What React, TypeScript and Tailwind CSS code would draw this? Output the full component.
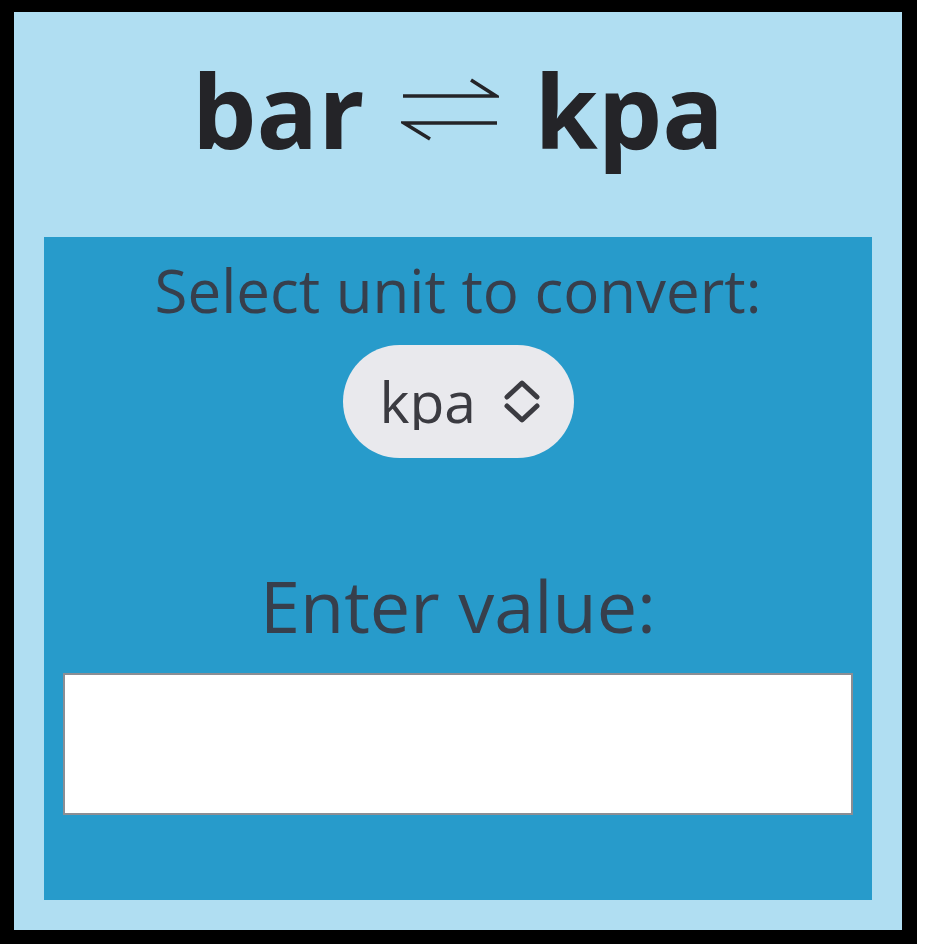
import { useState } from 'react';

const UNITS = ['kpa', 'bar'];

export default function App() {
  const [unit, setUnit] = useState('kpa');
  const [value, setValue] = useState('');

  return (
    <div className="w-[917px] h-[944px] bg-black pt-[12px] pl-[14px] pr-[15px] pb-[14px] font-['Open_Sans',sans-serif]">
      <div className="h-full bg-[#b0def2] px-[30px] pb-[30px] flex flex-col">
        <header className="h-[225px] shrink-0 pt-[47px] flex justify-center">
          <h1 className="flex items-start text-[102px] leading-none font-bold text-[#242428]">
            <span>bar</span>
            <SwapIcon />
            <span>kpa</span>
          </h1>
        </header>

        <main className="flex-1 bg-[#279bcb] flex flex-col items-center pt-[23px]">
          <label htmlFor="unit" className="text-[60px] leading-none text-[#373f4c]">
            Select unit to convert:
          </label>

          <div className="relative mt-[25px]">
            <select
              id="unit"
              value={unit}
              onChange={(e) => setUnit(e.target.value)}
              className="appearance-none h-[113px] w-[231px] rounded-full bg-[#e9e9ed] pl-[37px] text-[57px] leading-none text-[#3b3b41] outline-none"
            >
              {UNITS.map((u) => (
                <option key={u} value={u}>
                  {u}
                </option>
              ))}
            </select>
            <ChevronsIcon />
          </div>

          <label htmlFor="value" className="mt-[111px] text-[72px] leading-none text-[#373f4c]">
            Enter value:
          </label>

          <input
            id="value"
            type="number"
            value={value}
            onChange={(e) => setValue(e.target.value)}
            className="mt-[32px] h-[142px] w-[790px] bg-white border-2 border-[#8b8e94] px-4 text-[57px] text-[#242428] outline-none"
          />
        </main>
      </div>
    </div>
  );
}

// right harpoon over left harpoon
function SwapIcon() {
  return (
    <svg
      className="mx-[36px] mt-[18px]"
      width="98"
      height="64"
      viewBox="0 0 98 64"
      fill="none"
      stroke="#242428"
      strokeWidth="3.5"
      strokeLinecap="butt"
    >
      <path d="M2 19H95L70 3" />
      <path d="M96 46H3L29 62" />
    </svg>
  );
}

function ChevronsIcon() {
  return (
    <svg
      className="pointer-events-none absolute left-[160px] top-[35px]"
      width="38"
      height="43"
      viewBox="0 0 38 43"
      fill="none"
      stroke="#3b3b41"
      strokeWidth="5"
      strokeLinecap="round"
      strokeLinejoin="round"
    >
      <path d="M4 17L19 3L34 17" />
      <path d="M4 26L19 40L34 26" />
    </svg>
  );
}
